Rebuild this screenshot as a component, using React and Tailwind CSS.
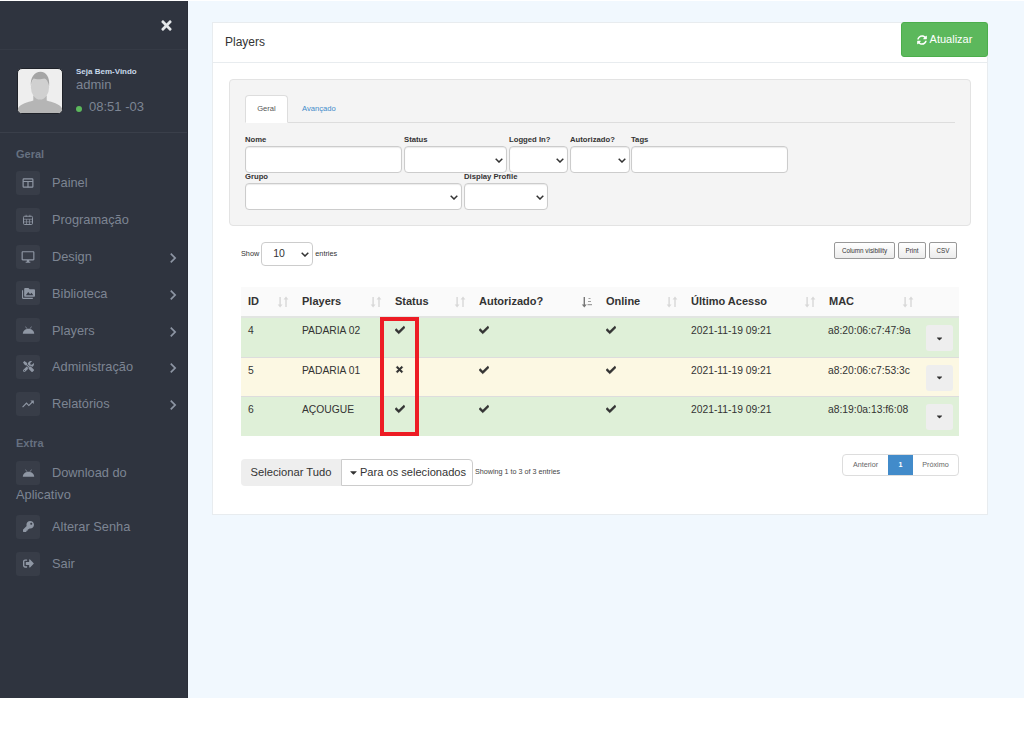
import React from 'react';
import { FaCheck, FaTimes, FaCaretDown, FaSyncAlt, FaKey, FaSignOutAlt, FaTools } from 'react-icons/fa';
import { MdTrendingUp, MdPermMedia, MdOutlineDesktopWindows, MdChevronRight } from 'react-icons/md';

const font = 'font-["Liberation_Sans",Arial,sans-serif]';

const Dome = () => (
  <svg viewBox="0 0 16 16" className="w-[13px] h-[13px]" fill="currentColor">
    <path d="M1 12c0-3.6 3-6.3 7-6.3s7 2.7 7 6.3H1z" />
    <path d="M4.400 3.200l1.600 2.600M11.600 3.200L10 5.800" stroke="currentColor" strokeWidth="0.9" />
  </svg>
);
const Panel = () => (
  <svg viewBox="0 0 16 16" className="w-[12px] h-[12px]" fill="none" stroke="currentColor" strokeWidth="1.6">
    <rect x="1.500" y="2.500" width="13" height="11" rx="1" />
    <path d="M1.500 6h13M8 6v7.500" />
  </svg>
);
const Calendar = () => (
  <svg viewBox="0 0 16 16" className="w-[12px] h-[12px]" fill="none" stroke="currentColor" strokeWidth="1.3">
    <rect x="2" y="3" width="12" height="11" rx="1.500" />
    <path d="M2 7h12M2 10.500h12M5.500 1v3M10.500 1v3M6 7v7M10 7v7" strokeWidth="0.9" />
  </svg>
);
const Chevron = () => (
  <svg viewBox="0 0 8 5" className="absolute right-[4px] top-1/2 -mt-[2px] w-[8px] h-[5px] pointer-events-none" fill="none" stroke="#333" strokeWidth="1.500">
    <path d="M0.700 0.700L4 4l3.300-3.300" />
  </svg>
);

const NAV = [
  { label: 'Painel', icon: <Panel /> },
  { label: 'Programação', icon: <Calendar /> },
  { label: 'Design', icon: <MdOutlineDesktopWindows size={14} />, arrow: true },
  { label: 'Biblioteca', icon: <MdPermMedia size={13} />, arrow: true },
  { label: 'Players', icon: <Dome />, arrow: true },
  { label: 'Administração', icon: <FaTools size={11} />, arrow: true },
  { label: 'Relatórios', icon: <MdTrendingUp size={14} />, arrow: true },
];

const ROWS = [
  { id: 4, name: 'PADARIA 02', ok: true, mac: 'a8:20:06:c7:47:9a', bg: 'bg-[#dff0d8]', h: 'h-[40px]' },
  { id: 5, name: 'PADARIA 01', ok: false, mac: 'a8:20:06:c7:53:3c', bg: 'bg-[#fcf8e3]', h: 'h-[39px]' },
  { id: 6, name: 'AÇOUGUE', ok: true, mac: 'a8:19:0a:13:f6:08', bg: 'bg-[#dff0d8]', h: 'h-[40px]' },
];

const COLS = [
  { label: 'ID', w: 'w-[54px]' },
  { label: 'Players', w: 'w-[93px]' },
  { label: 'Status', w: 'w-[84px]' },
  { label: 'Autorizado?', w: 'w-[127px]', active: true },
  { label: 'Online', w: 'w-[85px]' },
  { label: 'Último Acesso', w: 'w-[138px]' },
  { label: 'MAC', w: 'w-[98px]' },
  { label: '', w: 'w-[39px]' },
];

function SortIcon({ active }) {
  if (active) {
    return (
      <svg viewBox="0 0 12 12" className="w-[12px] h-[12px] text-[#777]" fill="currentColor">
        <path d="M2.600 1h1.400v7.500h1.800L3.300 11.500.8 8.500h1.800z" />
        <path d="M7.500 2h2v1h-2zM7 5h3v1H7zM6.500 8h4.500v1.200H6.500z" opacity="0.7" />
      </svg>
    );
  }
  return (
    <svg viewBox="0 0 12 12" className="w-[12px] h-[12px] text-[#d8d8d8]" fill="currentColor">
      <path d="M2.400 1h1.400v7.500h1.700L3.100 11.500.7 8.500h1.700z" />
      <path d="M8.300 11h1.400V3.500h1.700L9 .5 6.600 3.500h1.700z" />
    </svg>
  );
}

const Tick = () => <FaCheck size={10} stroke="currentColor" strokeWidth={30} />;

function NavItem({ item }) {
  return (
    <div className="flex items-center h-[24px] mb-[12.8px] pl-[16px] pr-[4px] text-[12.800px] text-[#7d8593]">
      <span className="w-[24px] h-[24px] rounded-[3px] bg-[#383d48] flex items-center justify-center text-[#8f97a4] mr-[12px]">
        {item.icon}
      </span>
      <span className="flex-1">{item.label}</span>
      {item.arrow && <MdChevronRight size={20} className="text-[#8d95a3] mt-[3px]" />}
    </div>
  );
}

function Sidebar() {
  return (
    <aside className="w-[188px] shrink-0 bg-[#2f343f] border-r border-[#2a2e38]">
      <div className="h-[49px] flex items-center justify-end pr-[13px] border-b border-[#353a45]">
        <FaTimes size={15} className="text-[#e4e7ea]" />
      </div>
      <div className="h-[83px] flex pl-[17px] pt-[18px] border-b border-[#3a3f4a]">
        <div className="w-[46px] h-[46px] rounded-[5px] bg-[#eeeeee] overflow-hidden border border-[#1f2229]">
          <svg viewBox="0 0 46 46" className="w-full h-full">
            <path d="M0 46v-5c3-5 10-6 16-8v-5h14v5c6 2 13 3 16 8v5z" fill="#b5b5b5" />
            <ellipse cx="23" cy="19" rx="9.500" ry="13" fill="#d0d0d0" />
            <path d="M13.500 18c-1-9 4-15 10-15s10 6 9 15c-1-5-3-8-5-8-3 1-9 1-11 0-2 2-3 5-3 8z" fill="#a5a5a5" />
          </svg>
        </div>
        <div className="ml-[13px] -mt-[1px]">
          <div className="text-[8px] leading-[10px] font-bold text-[#c8d8ea]">Seja Bem-Vindo</div>
          <div className="text-[13px] leading-[18px] text-[#7d8593] -mt-[1px]">admin</div>
          <div className="flex items-center text-[13px] leading-[18px] text-[#7d8593] mt-[4px]">
            <span className="w-[6px] h-[6px] rounded-full bg-[#5cb85c] mr-[7px] mt-[3px]" />
            08:51 -03
          </div>
        </div>
      </div>
      <div className="pt-[14px] text-[11px] font-bold text-[#667080] pl-[16px] leading-[14px] mb-[10px]">Geral</div>
      {NAV.map(item => <NavItem key={item.label} item={item} />)}
      <div className="pt-[7px] text-[11px] font-bold text-[#667080] pl-[16px] leading-[14px] mb-[12px]">Extra</div>
      <div className="pl-[16px] pr-[10px] text-[12.800px] leading-[22px] text-[#7d8593] mb-[8.500px]">
        <span className="inline-flex align-middle -my-[1px] w-[24px] h-[24px] rounded-[3px] bg-[#383d48] items-center justify-center text-[#8f97a4] mr-[12px]">
          <Dome />
        </span>
        Download do Aplicativo
      </div>
      <NavItem item={{ label: 'Alterar Senha', icon: <FaKey size={11} /> }} />
      <NavItem item={{ label: 'Sair', icon: <FaSignOutAlt size={11} /> }} />
    </aside>
  );
}

const field = 'h-[27px] bg-white border border-[#cccccc] rounded-[4px] shadow-[inset_0_1px_1px_rgba(0,0,0,0.08)] text-[11px]';
const lbl = 'block text-[7.700px] font-bold leading-[5px] text-[#333] h-[9px] -mt-[3px]';

function Field({ label, w, select, extra }) {
  return (
    <div className={`${w} shrink-0 ${extra || ''}`}>
      <label className={lbl}>{label}</label>
      {select ? (
        <div className="relative">
          <select className={`${field} w-full appearance-none block`}><option></option></select>
          <Chevron />
        </div>
      ) : (
        <input className={`${field} w-full block`} />
      )}
    </div>
  );
}

function Filters() {
  return (
    <div className="mx-[16px] mt-[16px] h-[147px] bg-[#f4f4f4] border border-[#e3e3e3] rounded-[4px] px-[15px] pt-[15px]">
      <div className="flex h-[28px] border-b border-[#dddddd] text-[7.600px]">
        <div className="w-[43px] h-[28px] bg-white border border-[#dddddd] border-b-white rounded-t-[4px] flex items-center justify-center text-[#555]">Geral</div>
        <div className="ml-[14px] flex items-center text-[#428bca]">Avançado</div>
      </div>
      <div className="flex gap-[2px] mt-[17px]">
        <Field label="Nome" w="w-[157px]" />
        <Field label="Status" w="w-[103px]" select />
        <Field label="Logged In?" w="w-[59px]" select />
        <Field label="Autorizado?" w="w-[60px]" select />
        <Field label="Tags" w="w-[157px]" extra="-ml-[1px]" />
      </div>
      <div className="flex gap-[2px] mt-[4px]">
        <Field label="Grupo" w="w-[217px]" select />
        <Field label="Display Profile" w="w-[84px]" select />
      </div>
    </div>
  );
}

function Players() {
  return (
    <table className="w-[718px] table-fixed border-collapse mx-[28px] text-[10.300px] text-[#333]">
      <thead>
        <tr className="h-[30px] bg-[#fafafa] border-b-2 border-[#e2e5e2] text-[11px] font-bold">
          {COLS.map(c => (
            <th key={c.label} className={`${c.w} pl-[7px] pr-[6px] text-left font-bold`}>
              {c.label && (
                <span className="flex items-center justify-between">
                  {c.label}
                  <SortIcon active={c.active} />
                </span>
              )}
            </th>
          ))}
        </tr>
      </thead>
      <tbody>
        {ROWS.map(r => (
          <tr key={r.id} className={`${r.h} ${r.bg} border-b border-[#dddddd] last:border-b-0 align-top`}>
            <td className="pl-[7px] pt-[5px]">{r.id}</td>
            <td className="pl-[7px] pt-[5px]">{r.name}</td>
            <td className="pl-[7px] pt-[7px]">{r.ok ? <Tick /> : <FaTimes size={9} stroke="currentColor" strokeWidth={40} />}</td>
            <td className="pl-[7px] pt-[7px]"><Tick /></td>
            <td className="pl-[7px] pt-[7px]"><Tick /></td>
            <td className="pl-[7px] pt-[5px]">2021-11-19 09:21</td>
            <td className="pl-[6px] pt-[5px] whitespace-nowrap">{r.mac}</td>
            <td className="pt-[7px]">
              <div className="ml-[6px] w-[27px] h-[26px] rounded-[3px] bg-[#eeeeee] flex items-center justify-center">
                <FaCaretDown size={9} />
              </div>
            </td>
          </tr>
        ))}
      </tbody>
    </table>
  );
}

export default function App() {
  return (
    <div className={`${font} relative w-[1024px] h-[747px] bg-white overflow-hidden pt-[1px]`}>
      <div className="flex h-[697px]">
        <Sidebar />
        <main className="flex-1 bg-[#f1f8fe] pl-[24px] pr-[36px] pt-[21px]">
          <div className="h-[493px] bg-white border border-[#e8ecef]">
            <div className="h-[40px] flex justify-between border-b border-[#e8ecef]">
              <h1 className="pl-[12px] text-[12px] leading-[39px] text-[#333]">Players</h1>
              <button className="w-[87px] h-[35px] -mt-[1px] -mr-[1px] bg-[#5cb85c] border border-[#4cae4c] rounded-[3px] text-white text-[11px] flex items-center justify-center gap-[3px]">
                <FaSyncAlt size={10} /> Atualizar
              </button>
            </div>
            <Filters />
            <div className="flex items-center justify-between h-[24px] mt-[16px] mx-[28px] text-[7.300px] text-[#333]">
              <div className="flex items-center gap-[2px]">
                Show
                <div className="relative w-[52px]">
                  <select className="w-full block h-[24px] appearance-none bg-white border border-[#cccccc] rounded-[4px] text-[10.500px] pl-[11px]">
                    <option>10</option>
                  </select>
                  <Chevron />
                </div>
                entries
              </div>
              <div className="flex gap-[3px] mr-[2px] self-start">
                <button className="w-[61px] h-[17px] bg-gradient-to-b from-white to-[#ececec] border border-[#999999] rounded-[2px] text-[6.300px] text-[#333]">Column visibility</button>
                <button className="w-[28px] h-[17px] bg-gradient-to-b from-white to-[#ececec] border border-[#999999] rounded-[2px] text-[6.300px] text-[#333]">Print</button>
                <button className="w-[28px] h-[17px] bg-gradient-to-b from-white to-[#ececec] border border-[#999999] rounded-[2px] text-[6.300px] text-[#333]">CSV</button>
              </div>
            </div>
            <div className="mt-[21px]"><Players /></div>
            <div className="flex justify-between mx-[28px] mt-[17px]">
              <div className="flex items-center mt-[6px] h-[27px]">
                <button className="w-[100px] h-[27px] bg-[#eeeeee] rounded-l-[4px] text-[11.200px] text-[#333]">Selecionar Tudo</button>
                <button className="w-[132px] h-[27px] bg-white border border-[#cccccc] rounded-r-[4px] text-[11.100px] text-[#333] flex items-center justify-center gap-[1px]">
                  <FaCaretDown size={11} /> Para os selecionados
                </button>
                <span className="ml-[2px] text-[7.200px] text-[#444] -mt-[1px]">Showing 1 to 3 of 3 entries</span>
              </div>
              <div className="flex h-[22px] mt-[1px] text-[7.200px] border border-[#dddddd] rounded-[4px] overflow-hidden text-[#666]">
                <span className="w-[45px] flex items-center justify-center">Anterior</span>
                <span className="w-[25px] flex items-center justify-center bg-[#428bca] text-white font-bold">1</span>
                <span className="w-[45px] flex items-center justify-center">Próximo</span>
              </div>
            </div>
          </div>
        </main>
      </div>
      <div className="absolute left-[380px] top-[317px] w-[39px] h-[119px] border-[4px] border-[#ed1c24]" />
    </div>
  );
}
